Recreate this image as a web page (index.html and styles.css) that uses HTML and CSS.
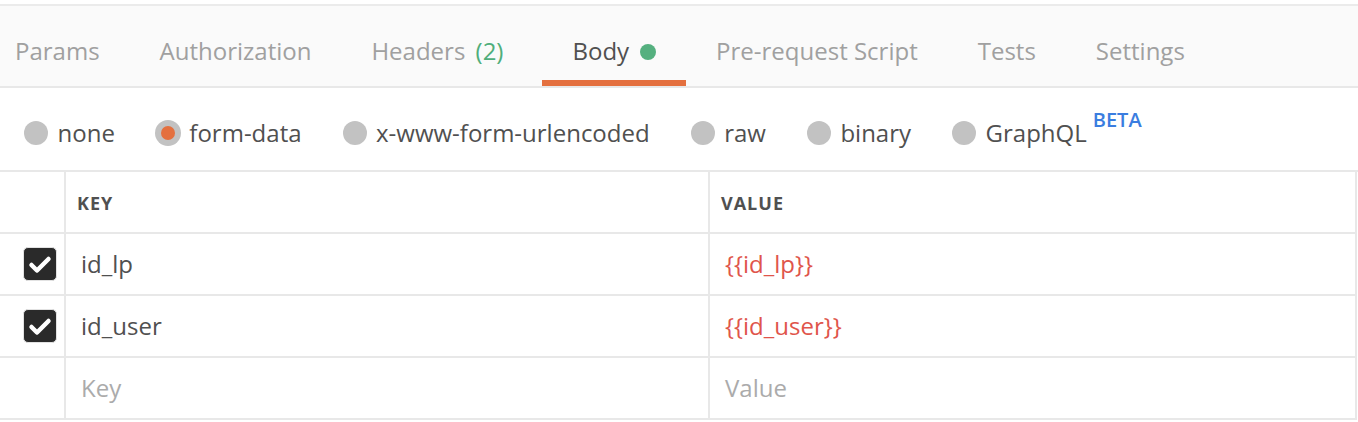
FILE: index.html
```html
<!DOCTYPE html>
<html lang="en">
<head>
<meta charset="utf-8">
<title>Request body</title>
<link rel="stylesheet" href="styles.css">
</head>
<body>
<div class="panel">
  <nav class="tabs">
    <div class="tab first">Params</div>
    <div class="tab">Authorization</div>
    <div class="tab">Headers <span class="count">(2)</span></div>
    <div class="tab active">Body<span class="dot"></span></div>
    <div class="tab">Pre-request Script</div>
    <div class="tab">Tests</div>
    <div class="tab">Settings</div>
  </nav>

  <div class="body-types">
    <label class="radio"><span class="circle"></span><span class="lbl">none</span></label>
    <label class="radio on"><span class="circle"><span class="inner"></span></span><span class="lbl">form-data</span></label>
    <label class="radio"><span class="circle"></span><span class="lbl">x-www-form-urlencoded</span></label>
    <label class="radio"><span class="circle"></span><span class="lbl">raw</span></label>
    <label class="radio"><span class="circle"></span><span class="lbl">binary</span></label>
    <label class="radio"><span class="circle"></span><span class="lbl">GraphQL<span class="beta">BETA</span></span></label>
  </div>

  <div class="kv">
    <div class="cell chk head"></div>
    <div class="cell head">KEY</div>
    <div class="cell head">VALUE</div>

    <div class="cell chk"><span class="cb"><svg viewBox="0 0 32 32" width="32" height="32"><polyline points="7.5,17 13,22.5 24.5,11" fill="none" stroke="#fff" stroke-width="4.5" stroke-linecap="round" stroke-linejoin="round"/></svg></span></div>
    <div class="cell key">id_lp</div>
    <div class="cell val var">{{id_lp}}</div>

    <div class="cell chk"><span class="cb"><svg viewBox="0 0 32 32" width="32" height="32"><polyline points="7.5,17 13,22.5 24.5,11" fill="none" stroke="#fff" stroke-width="4.5" stroke-linecap="round" stroke-linejoin="round"/></svg></span></div>
    <div class="cell key">id_user</div>
    <div class="cell val var">{{id_user}}</div>

    <div class="cell chk"></div>
    <div class="cell key ph">Key</div>
    <div class="cell val ph">Value</div>
  </div>
</div>
</body>
</html>
```

FILE: styles.css
```css
html, body {
  margin: 0;
  background: #ffffff;
}

body {
  font-family: "Open Sans", "DejaVu Sans", sans-serif;
  color: #505050;
}

.panel {
  padding-top: 4px;
}

/* ---------- tabs ---------- */
.tabs {
  display: flex;
  height: 80px;
  background: #fafafa;
  border-top: 2px solid #ebebeb;
  border-bottom: 2px solid #e8e8e8;
}

.tab {
  box-sizing: border-box;
  height: 80px;
  padding: 29px 30px 0;
  border-bottom: 6px solid transparent;
  font-size: 24px;
  line-height: 32px;
  color: #a0a0a0;
  white-space: nowrap;
}

.tab.first {
  padding-left: 15px;
}

.tab.active {
  color: #505050;
  border-bottom-color: #e4703f;
}

.count {
  margin-left: 4px;
  margin-right: 9px;
  color: #4fae7b;
}

.dot {
  display: inline-block;
  width: 16px;
  height: 16px;
  margin-left: 11px;
  border-radius: 50%;
  background: #55b07f;
}

/* ---------- body type radios ---------- */
.body-types {
  display: flex;
  gap: 41px;
  height: 32px;
  padding: 29px 0 21px 24px;
}

.radio {
  display: flex;
  align-items: center;
  gap: 9.5px;
  font-size: 24px;
  line-height: 32px;
  color: #505050;
  white-space: nowrap;
}

.circle {
  display: flex;
  align-items: center;
  justify-content: center;
  width: 24px;
  height: 24px;
  border-radius: 50%;
  background: #c2c2c2;
}

.radio.on .circle {
  box-shadow: 0 0 0 1px #c2c2c2;
}

.inner {
  width: 14px;
  height: 14px;
  border-radius: 50%;
  background: #e4703f;
}

.beta {
  margin-left: 6px;
  font-size: 20px;
  font-weight: 600;
  line-height: 0;
  color: #3a7de0;
  vertical-align: 15px;
}

/* ---------- key / value table ---------- */
.kv {
  display: grid;
  grid-template-columns: 66px 644px 647px;
  border-top: 2px solid #e8e8e8;
}

.cell {
  box-sizing: border-box;
  height: 62px;
  display: flex;
  align-items: center;
  border-right: 2px solid #e8e8e8;
  border-bottom: 2px solid #e8e8e8;
  padding-left: 15px;
  font-size: 24px;
  line-height: 32px;
  color: #505050;
  white-space: nowrap;
}

.cell.head {
  padding-left: 11px;
  padding-top: 2px;
  font-size: 18px;
  font-weight: 700;
  line-height: 24px;
  letter-spacing: 1px;
}

.cell.chk {
  padding-left: 23px;
}

.cb {
  display: block;
  width: 32px;
  height: 32px;
  border: 1px solid #e2e2e2;
  border-radius: 5px;
  background: #2a2a2a;
}

.cb svg {
  display: block;
}

.var {
  color: #e0554b;
}

.ph {
  color: #ababab;
}
```
